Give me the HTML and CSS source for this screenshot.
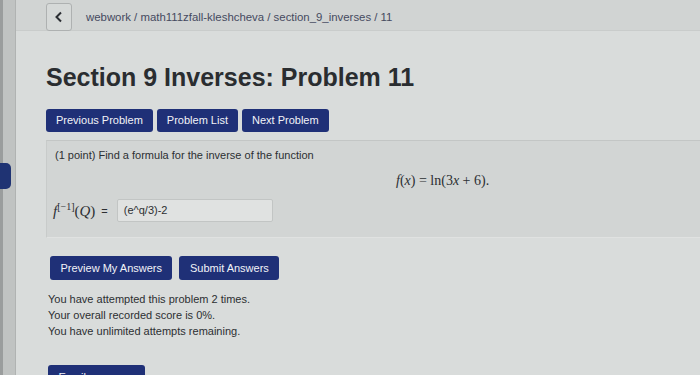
FILE: index.html
```html
<!DOCTYPE html>
<html>
<head>
<meta charset="utf-8">
<link rel="stylesheet" href="styles.css">
</head>
<body>
<div class="sidebar"><div class="tab"></div></div>
<div class="main">
  <div class="crumbbar">
    <div class="back">
      <svg width="10" height="12" viewBox="0 0 10 12"><path d="M7 1.5 L2.5 6 L7 10.5" fill="none" stroke="#2b2e33" stroke-width="2"/></svg>
    </div>
    <div class="crumbs">webwork / math111zfall-kleshcheva / section_9_inverses / 11</div>
  </div>
  <div class="content">
    <h1 class="title">Section 9 Inverses: Problem 11</h1>
    <div class="navrow">
      <span class="btn">Previous Problem</span>
      <span class="btn">Problem List</span>
      <span class="btn">Next Problem</span>
    </div>
    <div class="problem">
      <div class="prompt">(1 point) Find a formula for the inverse of the function</div>
      <div class="display"><i>f</i>(<i>x</i>) = ln(3<i>x</i> + 6).</div>
      <div class="answer">
        <span class="lhs"><i>f</i><sup>[−1]</sup>(<i>Q</i>)</span>
        <span class="eq">=</span>
        <span class="input">(e^q/3)-2</span>
      </div>
    </div>
    <div class="actions">
      <span class="btn big">Preview My Answers</span>
      <span class="btn big">Submit Answers</span>
    </div>
    <div class="status">
      <div>You have attempted this problem 2 times.</div>
      <div>Your overall recorded score is 0%.</div>
      <div>You have unlimited attempts remaining.</div>
    </div>
    <div class="emailrow"><span class="btn big email">Email Instructor</span></div>
  </div>
</div>
</body>
</html>
```

FILE: styles.css
```css
html, body {
  margin: 0;
  padding: 0;
}
body {
  width: 700px;
  height: 375px;
  overflow: hidden;
  display: flex;
  background: #d9dcdb;
  font-family: "Liberation Sans", Arial, sans-serif;
  color: #2c2f32;
}
.sidebar {
  width: 12px;
  flex: none;
  background: #c0c3c2;
  border-left: 3px solid #9a9d9d;
  border-right: 1px solid #b0b3b2;
  padding-top: 163px;
  box-sizing: content-box;
}
.tab {
  width: 11px;
  height: 26px;
  margin-left: -3px;
  background: #1f3373;
  border-radius: 0 5px 5px 0;
}
.main {
  flex: 1;
  min-width: 0;
}
.crumbbar {
  height: 31px;
  background: #d1d4d3;
  border-bottom: 1px solid #c9cccb;
  display: flex;
  align-items: center;
  padding-left: 30px;
  box-sizing: border-box;
}
.back {
  width: 26px;
  height: 28px;
  margin-top: 4px;
  border: 1px solid #aeb1b1;
  border-radius: 3px;
  background: #d6d9d8;
  display: flex;
  align-items: center;
  justify-content: center;
  box-sizing: border-box;
}
.crumbs {
  margin-left: 14px;
  margin-top: 4px;
  font-size: 11.4px;
  color: #454a60;
}
.content {
  padding-left: 30px;
}
.title {
  margin: 31px 0 0 0;
  font-size: 25px;
  line-height: 30px;
  font-weight: bold;
  color: #2a2d30;
}
.navrow {
  display: flex;
  gap: 4px;
  margin-top: 17px;
}
.btn {
  display: inline-block;
  background: #1f3077;
  color: #f2f3f7;
  font-size: 11px;
  line-height: 23px;
  height: 23px;
  padding: 0 10px;
  border-radius: 3px;
}
.problem {
  margin-top: 8px;
  background: #d2d5d4;
  border-top: 1px solid #c3c6c5;
  border-bottom: 1px solid #e0e2e1;
  border-left: 1px solid #c8cbca;
  height: 98px;
  padding: 7px 0 0 8px;
  box-sizing: border-box;
  font-size: 11px;
}
.prompt {
  line-height: 14px;
}
.display {
  font-family: "Liberation Serif", "Times New Roman", serif;
  font-size: 14px;
  margin: 11px 0 0 341px;
  line-height: 16px;
}
.answer {
  display: flex;
  align-items: center;
  margin-top: 10px;
  margin-left: -2px;
}
.lhs {
  font-family: "Liberation Serif", "Times New Roman", serif;
  font-size: 15px;
}
.lhs sup {
  font-size: 10px;
  vertical-align: 6px;
}
.eq {
  margin: 0 9px 0 6px;
  font-size: 11px;
}
.input {
  width: 156px;
  height: 23px;
  line-height: 21px;
  box-sizing: border-box;
  border: 1px solid #c2c5c4;
  border-radius: 2px;
  background: #e0e2e1;
  padding-left: 6px;
  font-size: 11px;
}
.actions {
  display: flex;
  gap: 7px;
  margin-top: 18px;
  margin-left: 4px;
}
.big {
  font-size: 11px;
  height: 24px;
  line-height: 24px;
  padding: 0 10.5px;
}
.status {
  margin-top: 11px;
  margin-left: 2px;
  font-size: 11px;
  line-height: 16px;
  color: #2c2f32;
}
.emailrow {
  margin-top: 26px;
  margin-left: 2px;
}
.email {
  width: 97px;
  box-sizing: border-box;
}
```
